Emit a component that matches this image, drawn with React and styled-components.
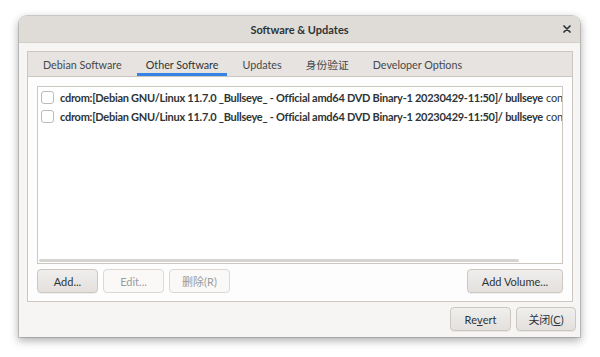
import React from 'react'
import styled, { createGlobalStyle } from 'styled-components'

const GlobalStyle = createGlobalStyle`
  html, body { margin: 0; padding: 0; background: #ffffff; }
  body { font-family: Lato, "Noto Sans CJK SC", sans-serif; color: #2e3436; }
  * { box-sizing: border-box; }
`

const Page = styled.div`
  width: 600px;
  height: 357px;
  padding: 16px 20px 20px 19px;
`

const Window = styled.div`
  width: 561px;
  height: 321px;
  display: flex;
  flex-direction: column;
  background: #f6f5f4;
  border-radius: 8px 8px 0 0;
  box-shadow: 0 3px 9px 1px rgba(0, 0, 0, 0.3), 0 0 0 1px rgba(0, 0, 0, 0.15);
  overflow: hidden;
`

const TitleBar = styled.div`
  height: 27px;
  flex: none;
  display: grid;
  grid-template-columns: 1fr auto 1fr;
  align-items: center;
  background: #dfdcd8;
  border-bottom: 1px solid #d4cfca;
`

const Title = styled.div`
  grid-column: 2;
  font-size: 11px;
  font-weight: 700;
  color: #2e3436;
`

const CloseButton = styled.div`
  justify-self: end;
  margin-right: 6px;
  width: 14px;
  height: 14px;
  display: flex;
  align-items: center;
  justify-content: center;
`

const Body = styled.div`
  flex: 1;
  display: flex;
  flex-direction: column;
  padding: 8px 7px 6px 8px;
`

const Notebook = styled.div`
  height: 251px;
  flex: none;
  display: flex;
  flex-direction: column;
  border: 1px solid #cdc7c2;
`

const TabBar = styled.div`
  height: 25px;
  flex: none;
  display: flex;
  gap: 6px;
  padding-left: 6px;
  background: #e6e3e0;
  border-bottom: 1px solid #cdc7c2;
`

const Tab = styled.div`
  padding: 3px 9px 0;
  display: flex;
  align-items: center;
  font-size: 10.75px;
  color: ${props => (props.$active ? '#2e3436' : '#45494b')};
  border-bottom: 3px solid ${props => (props.$active ? '#3584e4' : 'transparent')};
`

const TabPage = styled.div`
  flex: 1;
  display: flex;
  flex-direction: column;
  gap: 5px;
  padding: 9px 9px 8px 9px;
  background: #fdfdfd;
`

const ListBox = styled.div`
  flex: 1;
  position: relative;
  border: 1px solid #cdc7c2;
  background: #ffffff;
  overflow: hidden;
  padding-top: 1px;
`

const Row = styled.div`
  height: 19px;
  display: flex;
  align-items: center;
  gap: 6px;
  padding-left: 3px;
  white-space: nowrap;
  font-size: 11px;
`

const Check = styled.span`
  width: 13px;
  height: 13px;
  flex: none;
  border: 1px solid #c0bab4;
  border-radius: 3px;
  background: #ffffff;
`

const Source = styled.span`
  font-weight: 700;
  letter-spacing: -0.27px;
`

const Components = styled.span`
  margin-left: 3px;
  letter-spacing: -0.2px;
`

const Scrollbar = styled.div`
  position: absolute;
  left: 1px;
  bottom: 1px;
  width: 480px;
  height: 3px;
  border-radius: 2px;
  background: #d6d4d1;
`

const ButtonRow = styled.div`
  display: flex;
  gap: 5px;
`

const Spacer = styled.div`
  flex: 1;
`

const Button = styled.div`
  height: 24px;
  width: ${props => props.$w}px;
  display: flex;
  align-items: center;
  justify-content: center;
  font-size: 11px;
  border-radius: 4px;
  border: 1px solid ${props => (props.$disabled ? '#dcd8d4' : '#cdc7c2')};
  background: ${props => (props.$disabled ? '#faf9f8' : 'linear-gradient(#f0efed, #e3e0dd)')};
  color: ${props => (props.$disabled ? '#9a9c9d' : '#2e3436')};
  box-shadow: ${props => (props.$disabled ? 'none' : '0 1px 0 rgba(0,0,0,0.06)')};
`

const Footer = styled.div`
  flex: 1;
  display: flex;
  justify-content: flex-end;
  align-items: flex-end;
  gap: 5px;
  margin-right: -3px;
`

const Mnemonic = styled.span`
  text-decoration: underline;
`

const sources = [
  'cdrom:[Debian GNU/Linux 11.7.0 _Bullseye_ - Official amd64 DVD Binary-1 20230429-11:50]/ bullseye',
  'cdrom:[Debian GNU/Linux 11.7.0 _Bullseye_ - Official amd64 DVD Binary-1 20230429-11:50]/ bullseye',
]

const tabs = ['Debian Software', 'Other Software', 'Updates', '身份验证', 'Developer Options']

export default function App() {
  return (
    <Page>
      <GlobalStyle />
      <Window>
        <TitleBar>
          <Title>Software &amp; Updates</Title>
          <CloseButton>
            <svg width="8" height="8" viewBox="0 0 8 8">
              <path d="M1 1 L7 7 M7 1 L1 7" stroke="#2e3436" strokeWidth="1.7" strokeLinecap="round" />
            </svg>
          </CloseButton>
        </TitleBar>
        <Body>
          <Notebook>
            <TabBar>
              {tabs.map(t => (
                <Tab key={t} $active={t === 'Other Software'}>{t}</Tab>
              ))}
            </TabBar>
            <TabPage>
              <ListBox>
                {sources.map((s, i) => (
                  <Row key={i}>
                    <Check />
                    <span>
                      <Source>{s}</Source>
                      <Components>contrib main</Components>
                    </span>
                  </Row>
                ))}
                <Scrollbar />
              </ListBox>
              <ButtonRow>
                <Button $w={61}>Add...</Button>
                <Button $w={61} $disabled>Edit...</Button>
                <Button $w={61} $disabled>删除(R)</Button>
                <Spacer />
                <Button $w={96}>Add Volume...</Button>
              </ButtonRow>
            </TabPage>
          </Notebook>
          <Footer>
            <Button $w={61}>Re<Mnemonic>v</Mnemonic>ert</Button>
            <Button $w={60}>关闭(<Mnemonic>C</Mnemonic>)</Button>
          </Footer>
        </Body>
      </Window>
    </Page>
  )
}
